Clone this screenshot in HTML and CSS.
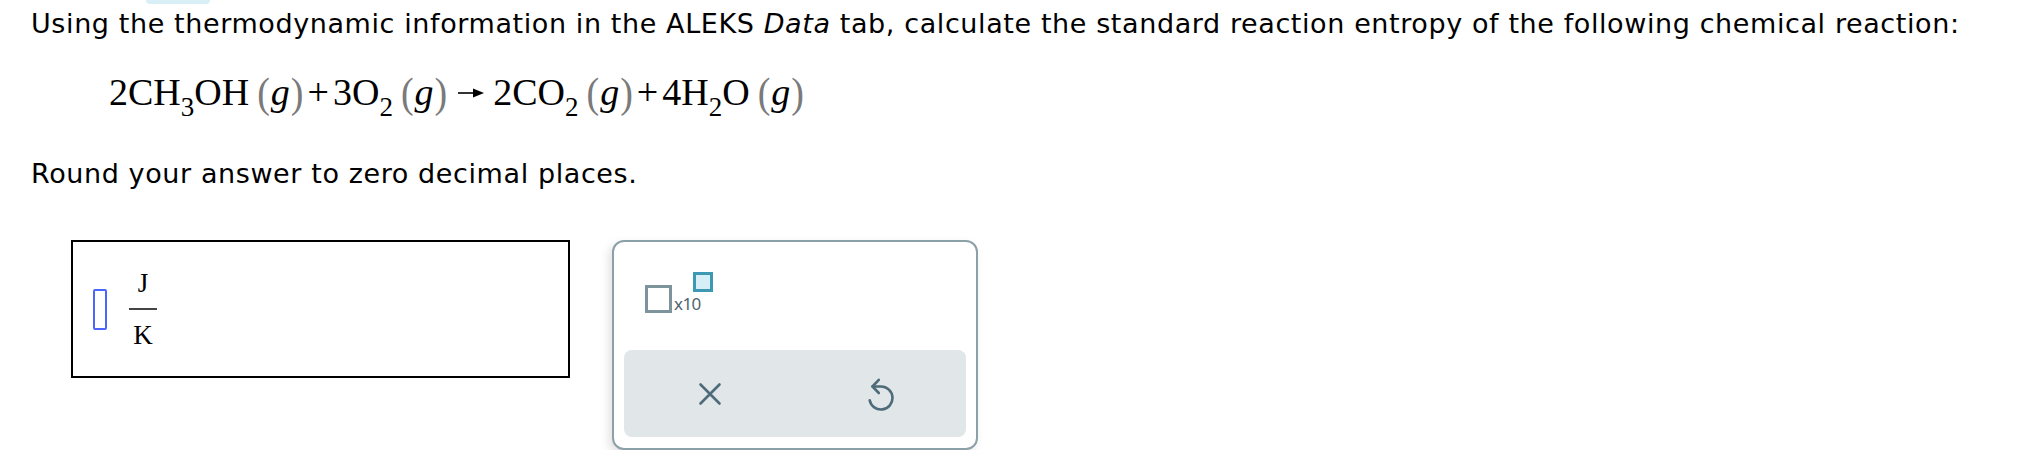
FILE: index.html
```html
<!DOCTYPE html>
<html>
<head>
<meta charset="utf-8">
<link rel="stylesheet" href="styles.css">
</head>
<body>
<div class="tabstub"></div>
<div class="page">
  <p class="prompt first">Using the thermodynamic information in the ALEKS <i>Data</i> tab, calculate the standard reaction entropy of the following chemical reaction:</p>
  <div class="eq">
    <span class="sp">2CH<sub>3</sub>OH</span><span class="ph"><span class="paren">(</span><i>g</i><span class="paren">)</span></span><span class="op">+</span><span class="sp">3O<sub>2</sub></span><span class="ph"><span class="paren">(</span><i>g</i><span class="paren">)</span></span><span class="arrow"><svg width="26" height="12" viewBox="0 0 26 12"><line x1="0" y1="6" x2="18" y2="6" stroke="#000" stroke-width="1.6"/><path d="M15 1.5 L26 6 L15 10.5 Z" fill="#000"/></svg></span><span class="sp">2CO<sub>2</sub></span><span class="ph"><span class="paren">(</span><i>g</i><span class="paren">)</span></span><span class="op">+</span><span class="sp">4H<sub>2</sub>O</span><span class="ph"><span class="paren">(</span><i>g</i><span class="paren">)</span></span>
  </div>
  <p class="prompt round">Round your answer to zero decimal places.</p>
  <div class="answer-row">
    <div class="answer-box">
      <span class="slot"></span>
      <span class="frac"><span class="num">J</span><span class="bar"></span><span class="den">K</span></span>
    </div>
    <div class="panel">
      <div class="tools">
        <div class="sci"><span class="base"></span><span class="x10">x10</span><span class="exp"></span></div>
      </div>
      <div class="actions">
        <div class="act">
          <svg width="24" height="24" viewBox="0 0 24 24"><path d="M2.5 2.5 L21.5 21.5 M21.5 2.5 L2.5 21.5" stroke="#4d6b78" stroke-width="2.6" stroke-linecap="round" fill="none"/></svg>
        </div>
        <div class="act">
          <svg width="30" height="34" viewBox="0 0 30 34"><path d="M6.5 9.5 L15 9.5 A11.5 11.5 0 1 1 3.7 23.2" stroke="#4d6b78" stroke-width="2.6" stroke-linecap="round" stroke-linejoin="round" fill="none"/><path d="M12.8 2.8 L6.5 9.5 L12.8 16" stroke="#4d6b78" stroke-width="2.6" stroke-linecap="round" stroke-linejoin="round" fill="none"/></svg>
        </div>
      </div>
    </div>
  </div>
</div>
</body>
</html>
```

FILE: styles.css
```css
html, body {
  margin: 0;
  padding: 0;
  background: #ffffff;
}

.tabstub {
  width: 64px;
  height: 4px;
  margin-left: 146px;
  background: #d9eff6;
  border-radius: 0 0 10px 10px;
}

.page {
  padding: 4px 0 0 31px;
  color: #000;
}

.prompt {
  margin: 0;
  font-family: "DejaVu Sans", Verdana, sans-serif;
  font-size: 27px;
  line-height: 32px;
  letter-spacing: 0.6px;
  white-space: nowrap;
}

.eq {
  margin: 22px 0 0 78px;
  font-family: "Liberation Serif", "Times New Roman", serif;
  font-size: 38px;
  line-height: 48px;
  white-space: nowrap;
}

.eq sub {
  font-size: 27px;
  line-height: 0;
  vertical-align: -11px;
}

.ph {
  margin-left: 8px;
}

.paren {
  color: #7a7a7a;
  display: inline-block;
  transform: scaleY(1.12);
}

.eq i {
  padding: 0 1px;
}

.op {
  margin: 0 4px;
}

.arrow {
  display: inline-block;
  margin: 0 9px 0 11px;
  vertical-align: 6px;
}

.round {
  margin-top: 42px;
}

.answer-row {
  display: flex;
  align-items: flex-start;
  margin-top: 50px;
  margin-left: 40px;
}

.answer-box {
  box-sizing: border-box;
  width: 499px;
  height: 138px;
  border: 2px solid #000;
  display: flex;
  align-items: center;
  padding-left: 20px;
}

.slot {
  box-sizing: border-box;
  width: 14px;
  height: 41px;
  border: 2px solid #4a66ff;
  border-radius: 2px;
}

.frac {
  display: inline-flex;
  flex-direction: column;
  align-items: center;
  margin-left: 22px;
  font-family: "Liberation Serif", "Times New Roman", serif;
  font-size: 27px;
  line-height: 27px;
}

.bar {
  width: 28px;
  height: 2px;
  background: #444;
  margin: 11px 0 12px;
}

.panel {
  box-sizing: border-box;
  width: 366px;
  height: 210px;
  margin-left: 42px;
  border: 2px solid #8ca0a8;
  border-radius: 12px;
  background: #fff;
  box-shadow: -3px 4px 10px rgba(0, 0, 0, 0.12);
  padding: 0 10px 11px 10px;
  display: flex;
  flex-direction: column;
}

.tools {
  flex: 1;
  padding: 30px 0 0 21px;
}

.sci {
  display: flex;
  align-items: flex-end;
  height: 41px;
}

.base {
  box-sizing: border-box;
  width: 27px;
  height: 28px;
  border: 3px solid #7e949d;
}

.x10 {
  font-family: "Noto Sans", "Open Sans", sans-serif;
  font-size: 17px;
  line-height: 17px;
  color: #4f646d;
  margin: 0 0 1px 2px;
  letter-spacing: -0.6px;
}

.exp {
  align-self: flex-start;
  box-sizing: border-box;
  width: 20px;
  height: 20px;
  margin-left: -8px;
  border: 3px solid #3d98b4;
  background: #d6eef5;
}

.actions {
  height: 87px;
  background: #e1e6e9;
  border-radius: 8px;
  display: grid;
  grid-template-columns: 1fr 1fr;
}

.act {
  display: flex;
  align-items: center;
  justify-content: center;
}
```
